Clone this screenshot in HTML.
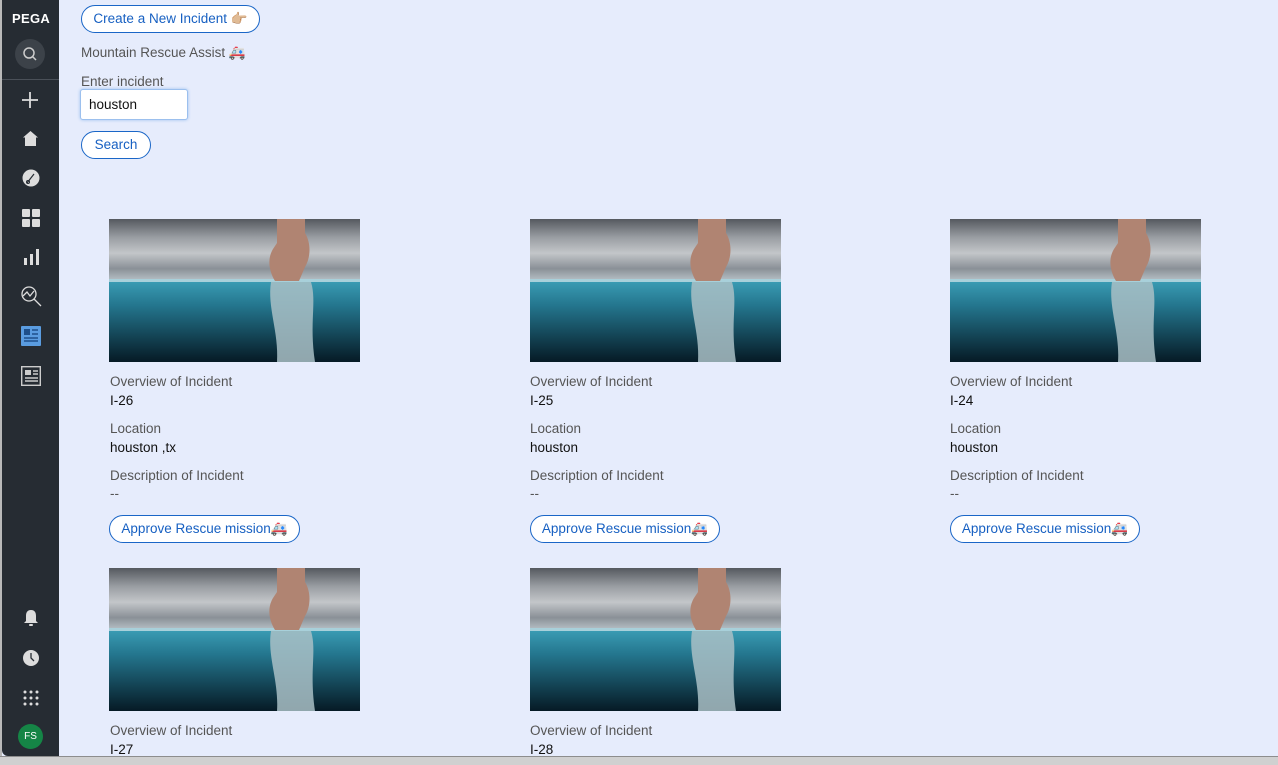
<!DOCTYPE html>
<html><head><meta charset="utf-8">
<style>
*{margin:0;padding:0;box-sizing:border-box}
body{width:1278px;height:765px;overflow:hidden;background:#e6ecfc;font-family:"Liberation Sans","DejaVu Sans",sans-serif;position:relative}
.side{position:absolute;left:2px;top:0;width:57px;height:756px;background:#262c33;border-bottom-left-radius:6px}
.edge{position:absolute;left:0;top:0;width:2px;height:756px;background:#b9b9b9}
.bottom{position:absolute;left:0;top:756px;width:1278px;height:9px;background:#d0d0d0;border-top:1px solid #8d8d8d}
.ab{position:absolute}
.btn{position:absolute;height:28px;border:1px solid #1a66c7;border-radius:14px;background:#fff;color:#1760c2;font-size:13.5px;line-height:26px;text-align:center;white-space:nowrap}
.lbl{position:absolute;font-size:13.5px;color:#555;white-space:nowrap}
.val{position:absolute;font-size:13.5px;color:#111;white-space:nowrap}
</style></head><body>
<div class="edge"></div>
<div class="side">
  <div class="ab" style="left:10px;top:11px;color:#fff;font-weight:bold;font-size:13px;letter-spacing:0.3px">PEGA</div>
  <div class="ab" style="left:13px;top:39px;width:30px;height:30px;border-radius:50%;background:#3c4249"></div>
  <svg class="ab" style="left:20px;top:46px" width="16" height="16" viewBox="0 0 16 16"><circle cx="7" cy="7" r="5" fill="none" stroke="#ccc" stroke-width="1.5"/><path d="M10.5 10.5 14 14" stroke="#ccc" stroke-width="1.5"/></svg>
  <div class="ab" style="left:0;top:79px;width:57px;height:1px;background:#4a5058"></div>
  <svg class="ab" style="left:19px;top:91px" width="18" height="18"><path d="M9 1v16M1 9h16" stroke="#ddd" stroke-width="1.8"/></svg>
  <svg class="ab" style="left:20px;top:130px" width="17" height="17"><path d="M8.5 1 1 7.5h2V16h11V7.5h2z" fill="#ddd"/></svg>
  <svg class="ab" style="left:20px;top:169px" width="18" height="18"><circle cx="9" cy="9" r="8.5" fill="#ddd"/><path d="M5 14 12 5" stroke="#262c33" stroke-width="1.2"/><circle cx="6" cy="13" r="1.5" fill="none" stroke="#262c33"/></svg>
  <svg class="ab" style="left:20px;top:209px" width="18" height="18"><rect x="0" y="0" width="8" height="8" rx="1" fill="#ddd"/><rect x="10" y="0" width="8" height="8" rx="1" fill="#ddd"/><rect x="0" y="10" width="8" height="8" rx="1" fill="#ddd"/><rect x="10" y="10" width="8" height="8" rx="1" fill="#ddd"/></svg>
  <svg class="ab" style="left:21px;top:248px" width="16" height="18"><rect x="1" y="10" width="3" height="7" fill="#ddd"/><rect x="7" y="6" width="3" height="11" fill="#ddd"/><rect x="13" y="1" width="3" height="16" fill="#ddd"/></svg>
  <svg class="ab" style="left:19px;top:286px" width="22" height="22"><circle cx="8" cy="8" r="7" fill="none" stroke="#ddd" stroke-width="1.3"/><path d="M2 10 6 6 9 10 13 5M13 13 20 20" stroke="#ddd" stroke-width="1.3" fill="none"/></svg>
  <svg class="ab" style="left:19px;top:326px" width="20" height="20"><rect width="20" height="20" rx="1" fill="#5a9ce0"/><rect x="3" y="3" width="6" height="6" fill="#1e4f8a"/><path d="M11 4h6M11 8h6M3 12h14M3 15h14" stroke="#1e4f8a" stroke-width="1.4"/></svg>
  <svg class="ab" style="left:19px;top:366px" width="20" height="20"><rect x=".7" y=".7" width="18.6" height="18.6" fill="none" stroke="#ccc" stroke-width="1.4"/><rect x="4" y="4" width="6" height="5" fill="#ccc"/><path d="M12 5h5M12 8h5M4 12h13M4 15h13" stroke="#ccc" stroke-width="1.4"/></svg>
  <svg class="ab" style="left:21px;top:609px" width="16" height="18"><path d="M8 1C4 1 3 4 3 7v5L1 14h14l-2-2V7c0-3-1-6-5-6z" fill="#ddd"/><rect x="6" y="15" width="4" height="2" rx="1" fill="#ddd"/></svg>
  <svg class="ab" style="left:20px;top:649px" width="18" height="18"><circle cx="9" cy="9" r="8" fill="#ddd"/><path d="M9 4v5l3 3" stroke="#262c33" stroke-width="1.3" fill="none"/></svg>
  <svg class="ab" style="left:21px;top:690px" width="16" height="16"><g fill="#ddd"><circle cx="2" cy="2" r="1.5"/><circle cx="8" cy="2" r="1.5"/><circle cx="14" cy="2" r="1.5"/><circle cx="2" cy="8" r="1.5"/><circle cx="8" cy="8" r="1.5"/><circle cx="14" cy="8" r="1.5"/><circle cx="2" cy="14" r="1.5"/><circle cx="8" cy="14" r="1.5"/><circle cx="14" cy="14" r="1.5"/></g></svg>
  <div class="ab" style="left:16px;top:724px;width:25px;height:25px;border-radius:50%;background:#158546;color:#fff;font-size:10px;line-height:25px;text-align:center">FS</div>
</div>
<div class="bottom"></div>

<svg width="0" height="0" style="position:absolute"><defs>
<linearGradient id="sky" x1="0" y1="0" x2="0" y2="1"><stop offset="0" stop-color="#55595f"/><stop offset=".3" stop-color="#9a9ea3"/><stop offset=".55" stop-color="#c3c6c9"/><stop offset=".8" stop-color="#8a9097"/><stop offset="1" stop-color="#b8c2c8"/></linearGradient>
<linearGradient id="sea" x1="0" y1="0" x2="0" y2="1"><stop offset="0" stop-color="#3a9cb4"/><stop offset=".3" stop-color="#24768e"/><stop offset="1" stop-color="#061a25"/></linearGradient>
<g id="pic"><rect width="251" height="62" fill="url(#sky)"/><rect y="62" width="251" height="81" fill="url(#sea)"/><rect y="60" width="251" height="3" fill="#a8d0da"/><path d="M168 0h28v14c6 10 6 24 0 34l-6 14h-24c-6-10-8-22-2-32l4-6z" fill="#b08472"/><path d="M162 63h40c6 20-2 40 4 80h-38c2-30-10-55-6-80z" fill="#a9bfc6" opacity=".85"/></g>
</defs></svg>

<div class="btn" style="left:81px;top:5px;width:179px">Create a New Incident 👉🏼</div>
<div class="lbl" style="left:81px;top:45px">Mountain Rescue Assist 🚑</div>
<div class="lbl" style="left:81px;top:74px">Enter incident</div>
<div class="ab" style="left:80px;top:89px;width:108px;height:31px;background:#fff;border:1px solid #9cc0ee;border-radius:3px;box-shadow:0 0 3px #9cc0ee;font-size:13.5px;line-height:29px;padding-left:8px;color:#111">houston</div>
<div class="btn" style="left:81px;top:131px;width:70px">Search</div>

<svg class="ab" style="left:109px;top:219px" width="251" height="143"><use href="#pic"/></svg>
<svg class="ab" style="left:530px;top:219px" width="251" height="143"><use href="#pic"/></svg>
<svg class="ab" style="left:950px;top:219px" width="251" height="143"><use href="#pic"/></svg>
<svg class="ab" style="left:109px;top:568px" width="251" height="143"><use href="#pic"/></svg>
<svg class="ab" style="left:530px;top:568px" width="251" height="143"><use href="#pic"/></svg>

<div class="lbl" style="left:110px;top:374px">Overview of Incident</div><div class="val" style="left:110px;top:393px">I-26</div>
<div class="lbl" style="left:110px;top:421px">Location</div><div class="val" style="left:110px;top:440px">houston ,tx</div>
<div class="lbl" style="left:110px;top:468px">Description of Incident</div><div class="val" style="left:110px;top:486px;color:#555">--</div>
<div class="btn" style="left:109px;top:515px;width:191px">Approve Rescue mission🚑</div>

<div class="lbl" style="left:530px;top:374px">Overview of Incident</div><div class="val" style="left:530px;top:393px">I-25</div>
<div class="lbl" style="left:530px;top:421px">Location</div><div class="val" style="left:530px;top:440px">houston</div>
<div class="lbl" style="left:530px;top:468px">Description of Incident</div><div class="val" style="left:530px;top:486px;color:#555">--</div>
<div class="btn" style="left:530px;top:515px;width:190px">Approve Rescue mission🚑</div>

<div class="lbl" style="left:950px;top:374px">Overview of Incident</div><div class="val" style="left:950px;top:393px">I-24</div>
<div class="lbl" style="left:950px;top:421px">Location</div><div class="val" style="left:950px;top:440px">houston</div>
<div class="lbl" style="left:950px;top:468px">Description of Incident</div><div class="val" style="left:950px;top:486px;color:#555">--</div>
<div class="btn" style="left:950px;top:515px;width:190px">Approve Rescue mission🚑</div>

<div class="lbl" style="left:110px;top:723px">Overview of Incident</div><div class="val" style="left:110px;top:742px">I-27</div>
<div class="lbl" style="left:530px;top:723px">Overview of Incident</div><div class="val" style="left:530px;top:742px">I-28</div>
</body></html>
